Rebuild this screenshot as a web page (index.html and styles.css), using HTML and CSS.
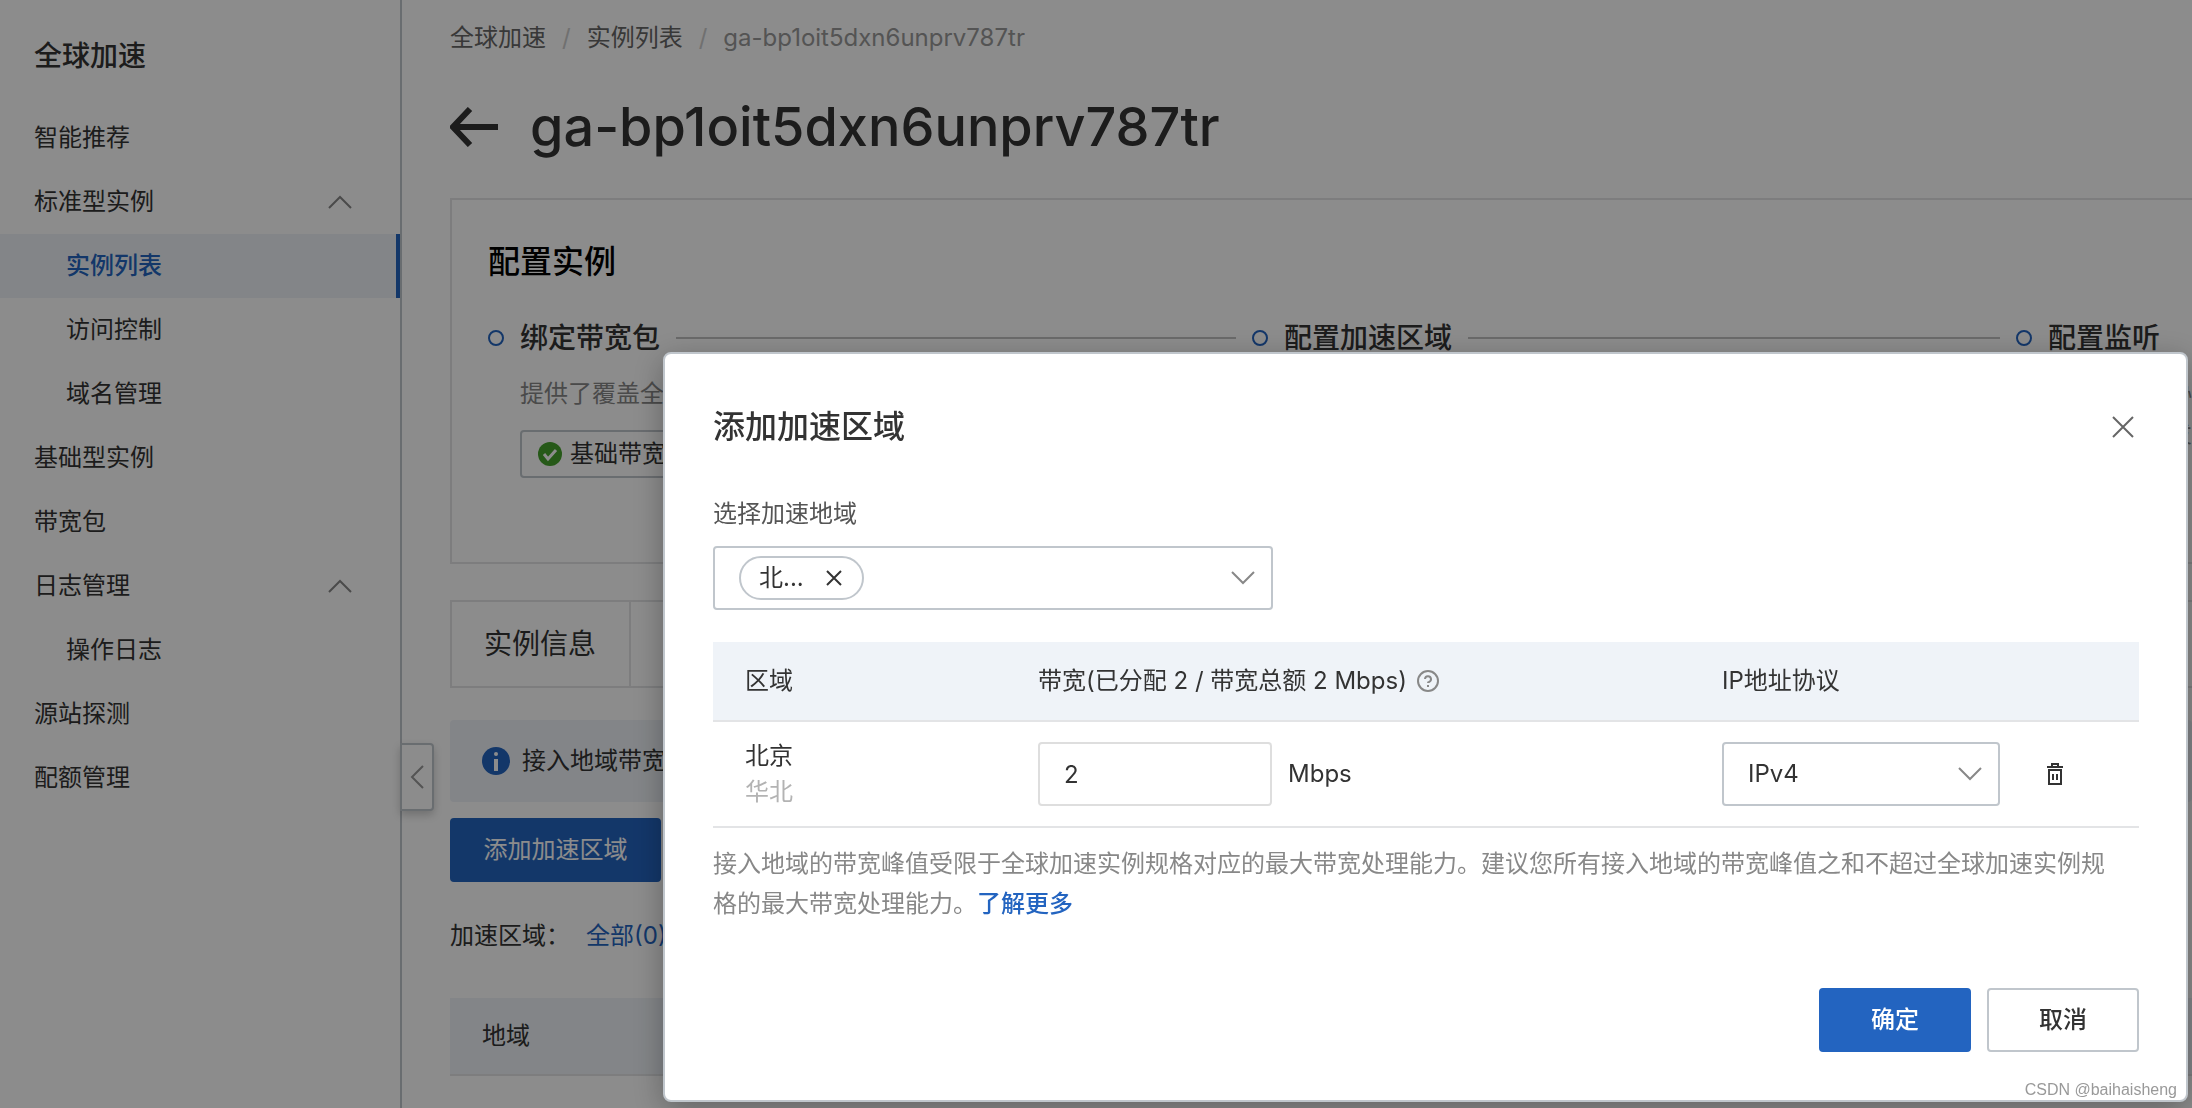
FILE: index.html
```html
<!DOCTYPE html>
<html lang="zh-CN">
<head>
    <meta charset="UTF-8">
    <meta name="viewport" content="width=device-width, initial-scale=1.0">
    <title>全球加速</title>
    <link rel="stylesheet" href="styles.css">
</head>
<body>
    <div class="layout">
        <nav class="sidebar">
            <h2 class="sidebar-title">全球加速</h2>
            <a class="item" href="#">智能推荐</a>
            <button class="item" type="button">标准型实例
                <svg class="chevron" viewBox="0 0 24 14"><path d="M1 13L12 2l11 11"/></svg>
            </button>
            <a class="item sub active" href="#">实例列表</a>
            <a class="item sub" href="#">访问控制</a>
            <a class="item sub" href="#">域名管理</a>
            <a class="item" href="#">基础型实例</a>
            <a class="item" href="#">带宽包</a>
            <button class="item" type="button">日志管理
                <svg class="chevron" viewBox="0 0 24 14"><path d="M1 13L12 2l11 11"/></svg>
            </button>
            <a class="item sub" href="#">操作日志</a>
            <a class="item" href="#">源站探测</a>
            <a class="item" href="#">配额管理</a>
            <button class="collapse" type="button" aria-label="收起">
                <svg viewBox="0 0 14 24"><path d="M13 1L2 12l11 11"/></svg>
            </button>
        </nav>

        <main class="main">
            <div class="breadcrumb">
                <a href="#">全球加速</a>
                <span class="slash">/</span>
                <a href="#">实例列表</a>
                <span class="slash">/</span>
                <span class="current">ga-bp1oit5dxn6unprv787tr</span>
            </div>
            <div class="page-head">
                <button class="back" type="button" aria-label="返回">
                    <svg viewBox="0 0 48 40"><path d="M48 20H4M20 2L3 20l17 18"/></svg>
                </button>
                <h1>ga-bp1oit5dxn6unprv787tr</h1>
            </div>

            <section class="card">
                <h3 class="card-title">配置实例</h3>
                <div class="steps">
                    <div class="step">
                        <div class="step-head"><i class="dot"></i><span>绑定带宽包</span><i class="line"></i></div>
                        <div class="step-body">
                            <p>提供了覆盖全球的带宽资源</p>
                            <div class="tag">
                                <svg viewBox="0 0 24 24"><circle cx="12" cy="12" r="12"/><path d="M6 12l4 5 8-9"/></svg>
                                基础带宽包
                            </div>
                        </div>
                    </div>
                    <div class="step">
                        <div class="step-head"><i class="dot"></i><span>配置加速区域</span><i class="line"></i></div>
                    </div>
                    <div class="step">
                        <div class="step-head"><i class="dot"></i><span>配置监听</span></div>
                        <div class="step-body">
                            <p>设置监听的协议和端口转发</p>
                        </div>
                    </div>
                </div>
            </section>

            <div class="tabs">
                <button class="tab" type="button">实例信息</button>
            </div>

            <div class="notice">
                <svg viewBox="0 0 28 28"><circle cx="14" cy="14" r="14"/><circle class="mark" cx="14" cy="7" r="2"/><path class="mark" d="M12 12h4v12h-4z"/></svg>
                接入地域带宽
            </div>
            <button class="btn primary add" type="button">添加加速区域</button>
            <div class="filter">
                <span>加速区域：</span>
                <a href="#">全部(0)</a>
            </div>
            <table class="list">
                <thead>
                    <tr><th>地域</th></tr>
                </thead>
            </table>
        </main>
    </div>

    <div class="overlay">
        <div class="modal" role="dialog" aria-labelledby="modal-title">
            <div class="modal-head">
                <h2 id="modal-title">添加加速区域</h2>
                <button class="icon-btn" type="button" aria-label="关闭">
                    <svg class="close" viewBox="0 0 22 22"><path d="M1 1l20 20M21 1L1 21"/></svg>
                </button>
            </div>

            <label class="label" for="region">选择加速地域</label>
            <div class="region">
                <div class="chip">
                    <span>北...</span>
                    <button class="icon-btn" type="button" aria-label="删除北京">
                        <svg viewBox="0 0 16 16"><path d="M1 1l14 14M15 1L1 15"/></svg>
                    </button>
                </div>
                <input id="region" type="text">
                <svg class="chevron" viewBox="0 0 24 14"><path d="M1 1l11 11L23 1"/></svg>
            </div>

            <table class="quota">
                <thead>
                    <tr>
                        <th class="col-area">区域</th>
                        <th class="col-band">
                            <span class="with-help">带宽(已分配 2 / 带宽总额 2 Mbps)
                                <svg viewBox="0 0 22 22"><circle cx="11" cy="11" r="10"/><path d="M8 9a3 3 0 1 1 4 3q-1 0-1 1M11 15v2"/></svg>
                            </span>
                        </th>
                        <th class="col-ip">IP地址协议</th>
                        <th></th>
                    </tr>
                </thead>
                <tbody>
                    <tr>
                        <td>
                            <div class="city">北京</div>
                            <div class="area">华北</div>
                        </td>
                        <td>
                            <div class="band">
                                <input id="band" type="text" value="2">
                                <label for="band">Mbps</label>
                            </div>
                        </td>
                        <td>
                            <div class="select">
                                <select aria-label="IP地址协议">
                                    <option>IPv4</option>
                                    <option>IPv6</option>
                                </select>
                                <svg class="chevron" viewBox="0 0 24 14"><path d="M1 1l11 11L23 1"/></svg>
                            </div>
                        </td>
                        <td>
                            <button class="icon-btn" type="button" aria-label="删除">
                                <svg class="trash" viewBox="0 0 18 24"><path d="M1 5h16M6 5V2h6v3M3 8h12v14H3zM7 12v6M11 12v6"/></svg>
                            </button>
                        </td>
                    </tr>
                </tbody>
            </table>

            <p class="hint">接入地域的带宽峰值受限于全球加速实例规格对应的最大带宽处理能力。建议您所有接入地域的带宽峰值之和不超过全球加速实例规格的最大带宽处理能力。<a href="#">了解更多</a></p>

            <div class="modal-foot">
                <button class="btn primary" type="button">确定</button>
                <button class="btn" type="button">取消</button>
            </div>
        </div>
    </div>
    <div class="watermark">CSDN @baihaisheng</div>
</body>
</html>
```
FILE: styles.css
```css
*{
    box-sizing: border-box;
    margin: 0;
    padding: 0;
}
body{
    height: 100vh;
    overflow: hidden;
    background: #fff;
    color: #333;
    font-family: Inter, "Noto Sans CJK SC", sans-serif;
    font-size: 24px;
    line-height: 36px;
}
a{
    color: #2364c0;
    text-decoration: none;
}
button, input, select{
    font: inherit;
    color: inherit;
    background: none;
    border: none;
    outline: none;
}
button{
    cursor: pointer;
}
svg{
    display: block;
    flex: none;
    fill: none;
    stroke: currentColor;
    stroke-width: 2;
}
h1, h2, h3{
    font-weight: 500;
}
th{
    font-weight: 400;
}
.chevron{
    width: 24px;
    height: 14px;
    color: #888;
}
.layout{
    display: flex;
    height: 100%;
}

/* sidebar */
.sidebar{
    position: relative;
    flex: none;
    width: 402px;
    border-right: 2px solid #c0c6cc;
}
.sidebar-title{
    padding: 32px 34px 26px;
    font-size: 28px;
    line-height: 48px;
}
.item{
    display: flex;
    align-items: center;
    justify-content: space-between;
    width: 100%;
    height: 64px;
    padding: 0 48px 0 34px;
    color: #333;
}
.item.sub{
    padding-left: 66px;
}
.item.active{
    color: #2364c0;
    font-weight: 500;
    background: #eff3f8;
    border-right: 4px solid #2364c0;
}
.collapse{
    position: absolute;
    left: 100%;
    top: 743px;
    display: flex;
    align-items: center;
    justify-content: center;
    width: 34px;
    height: 68px;
    color: #999;
    background: #fff;
    border: 2px solid #c0c6cc;
    border-radius: 0 4px 4px 0;
    box-shadow: 0 4px 8px rgba(0, 0, 0, .2);
}
.collapse svg{
    width: 14px;
    height: 24px;
}

/* page */
.main{
    flex: 1;
    min-width: 0;
    padding: 20px 0 0 48px;
    overflow: hidden;
}
.breadcrumb{
    display: flex;
    gap: 16px;
}
.breadcrumb a{
    color: #666;
}
.breadcrumb .slash{
    color: #ccc;
}
.breadcrumb .current{
    color: #999;
}
.page-head{
    display: flex;
    align-items: center;
    gap: 32px;
    padding: 32px 0;
}
.back svg{
    width: 48px;
    height: 40px;
    stroke-width: 6;
}
h1{
    font-size: 54px;
    line-height: 78px;
}
.card{
    height: 366px;
    padding: 36px 0 0 36px;
    border: 2px solid #e3e4e6;
    border-right: none;
}
.card-title{
    color: #000;
    font-size: 32px;
    line-height: 52px;
}
.steps{
    display: grid;
    grid-template-columns: 1fr 1fr 176px;
    margin-top: 30px;
}
.step-head{
    display: flex;
    align-items: center;
    gap: 16px;
    padding-right: 16px;
    font-size: 28px;
    font-weight: 500;
    line-height: 40px;
    white-space: nowrap;
}
.dot{
    width: 16px;
    height: 16px;
    border: 2px solid #2364c0;
    border-radius: 50%;
}
.line{
    flex: 1;
    height: 2px;
    background: #c1c1c1;
}
.step-body{
    padding: 16px 0 0 32px;
    color: #888;
    line-height: 40px;
}
.tag{
    display: inline-flex;
    align-items: center;
    gap: 8px;
    height: 48px;
    margin-top: 16px;
    padding: 0 16px;
    color: #333;
    border: 2px solid #c0c6cc;
    border-radius: 4px;
}
.tag svg{
    width: 24px;
    height: 24px;
    stroke: none;
}
.tag circle{
    fill: #45a22c;
}
.tag path{
    stroke: #fff;
    stroke-width: 3;
}
.tabs{
    display: flex;
    margin-top: 36px;
    border: 2px solid #e3e4e6;
    border-right: none;
}
.tab{
    height: 84px;
    padding: 0 33px 0 32px;
    font-size: 28px;
    border-right: 2px solid #e3e4e6;
}
.notice{
    display: flex;
    align-items: center;
    gap: 12px;
    height: 82px;
    margin: 32px 0 16px;
    padding: 0 32px;
    background: #eff3f8;
    border-radius: 4px;
}
.notice svg{
    width: 28px;
    height: 28px;
    fill: #2364c0;
    stroke: none;
}
.notice .mark{
    fill: #fff;
}
.filter{
    display: flex;
    gap: 16px;
    margin: 36px 0 44px;
}
.list{
    width: 100%;
    border-collapse: collapse;
}
.list th{
    height: 77px;
    padding: 0 32px;
    text-align: left;
    background: #eff3f8;
    border-bottom: 2px solid #e3e4e6;
}

/* buttons */
.btn{
    width: 152px;
    height: 64px;
    font-weight: 500;
    border: 2px solid #c0c6cc;
    border-radius: 4px;
}
.btn.primary{
    color: #fff;
    background: #2364c0;
    border-color: #2364c0;
}
.btn.add{
    width: 211px;
    font-weight: 400;
}
.icon-btn{
    display: flex;
    align-items: center;
}

/* dialog */
.overlay{
    position: fixed;
    inset: 0;
    display: flex;
    align-items: flex-start;
    padding: 352px 4px 0 663px;
    background: rgba(0, 0, 0, .45);
}
.modal{
    flex: 1;
    min-width: 0;
    padding: 47px 47px 48px 48px;
    background: #fff;
    border: 2px solid #c0c6cc;
    border-radius: 8px;
    box-shadow: 0 8px 32px rgba(0, 0, 0, .3);
}
.modal-head{
    display: flex;
    align-items: center;
    justify-content: space-between;
    padding-right: 5px;
}
.modal-head h2{
    font-size: 32px;
    line-height: 52px;
}
.close{
    width: 22px;
    height: 22px;
    color: #666;
}
.label{
    display: block;
    margin: 43px 0 14px;
    color: #555;
}
.region{
    display: flex;
    align-items: center;
    width: 560px;
    height: 64px;
    padding: 0 16px 0 24px;
    border: 2px solid #c0c6cc;
    border-radius: 4px;
}
.region input{
    flex: 1;
    min-width: 0;
}
.chip{
    display: flex;
    align-items: center;
    justify-content: space-between;
    width: 125px;
    height: 44px;
    padding: 0 20px 0 18px;
    border: 2px solid #c0c6cc;
    border-radius: 22px;
}
.chip svg{
    width: 16px;
    height: 16px;
}
.quota{
    width: 100%;
    margin-top: 32px;
    border-collapse: collapse;
    table-layout: fixed;
}
.quota th, .quota td{
    padding: 0 0 0 32px;
    text-align: left;
    border-bottom: 2px solid #e3e4e6;
}
.quota th{
    height: 79px;
    background: #eff3f8;
}
.quota td{
    height: 106px;
}
.col-area{
    width: 293px;
}
.col-band{
    width: 684px;
}
.col-ip{
    width: 310px;
}
.with-help{
    display: flex;
    align-items: center;
    gap: 10px;
}
.with-help svg{
    width: 22px;
    height: 22px;
    color: #888;
}
.area{
    color: #b3b3b3;
}
.band{
    display: flex;
    align-items: center;
    gap: 16px;
}
.band input{
    width: 234px;
    height: 64px;
    padding: 0 24px;
    border: 2px solid #dedede;
    border-radius: 4px;
}
.select{
    display: grid;
    align-items: center;
}
.select select, .select .chevron{
    grid-area: 1 / 1;
}
.select select{
    width: 100%;
    height: 64px;
    padding: 0 24px;
    appearance: none;
    border: 2px solid #c0c6cc;
    border-radius: 4px;
}
.select .chevron{
    justify-self: end;
    margin-right: 18px;
    pointer-events: none;
}
.trash{
    width: 18px;
    height: 24px;
}
.quota td:last-child{
    padding-left: 46px;
}
.hint{
    margin-top: 16px;
    padding-right: 24px;
    color: #888;
    line-height: 40px;
}
.hint a{
    font-weight: 500;
}
.modal-foot{
    display: flex;
    justify-content: flex-end;
    gap: 16px;
    margin-top: 64px;
}
.watermark{
    position: fixed;
    right: 15px;
    bottom: 6px;
    color: #999;
    font-family: "Liberation Sans", sans-serif;
    font-size: 16px;
    line-height: 24px;
}
```
